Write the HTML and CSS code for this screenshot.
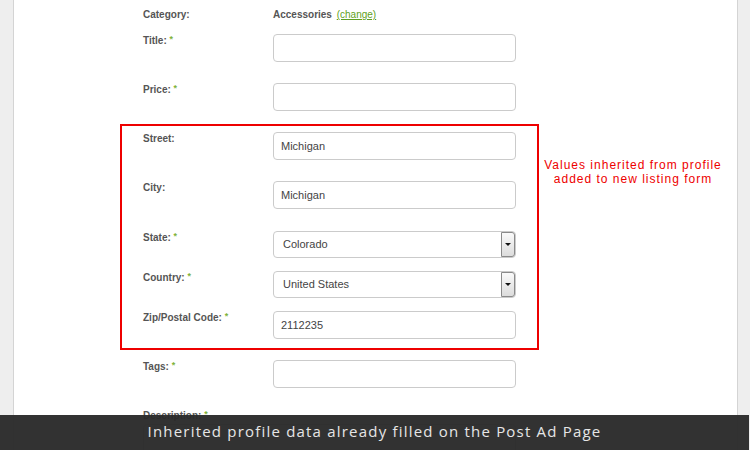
FILE: index.html
```html
<!DOCTYPE html>
<html>
<head>
<meta charset="utf-8">
<link rel="stylesheet" href="styles.css">
</head>
<body>
<div class="page">
  <div class="form">
    <div class="group first">
      <div class="row row-cat">
        <div class="label">Category:</div>
        <div class="value">Accessories <a class="change" href="#">(change)</a></div>
      </div>
      <div class="row row-title">
        <div class="label">Title: <span class="req">*</span></div>
        <div class="input"></div>
      </div>
      <div class="row row-text">
        <div class="label">Price: <span class="req">*</span></div>
        <div class="input"></div>
      </div>
    </div>
    <div class="hl-wrap">
      <div class="group hl">
        <div class="row row-first">
          <div class="label">Street:</div>
          <div class="input">Michigan</div>
        </div>
        <div class="row row-text">
          <div class="label">City:</div>
          <div class="input">Michigan</div>
        </div>
        <div class="row row-state">
          <div class="label">State: <span class="req">*</span></div>
          <div class="select"><span class="sel-text">Colorado</span><span class="sel-btn"><span class="tri"></span></span></div>
        </div>
        <div class="row row-sel">
          <div class="label">Country: <span class="req">*</span></div>
          <div class="select"><span class="sel-text">United States</span><span class="sel-btn"><span class="tri"></span></span></div>
        </div>
        <div class="row row-sel">
          <div class="label">Zip/Postal Code: <span class="req">*</span></div>
          <div class="input">2112235</div>
        </div>
      </div>
      <p class="note">Values inherited from profile<br>added to new listing form</p>
    </div>
    <div class="group last">
      <div class="row row-tags">
        <div class="label">Tags: <span class="req">*</span></div>
        <div class="input"></div>
      </div>
      <div class="label desc-label">Description: <span class="req">*</span></div>
      <div class="textarea"></div>
    </div>
  </div>
</div>
<div class="caption">Inherited profile data already filled on the Post Ad Page</div>
</body>
</html>
```
FILE: styles.css
```css
html, body {
  margin: 0;
  padding: 0;
  background: #eeeeee;
}
body {
  position: relative;
  width: 750px;
  height: 450px;
  overflow: hidden;
  font-family: "Liberation Sans", Arial, sans-serif;
  color: #555;
}
.page {
  margin-left: 13px;
  width: 723px;
  height: 450px;
  overflow: hidden;
  background: #fff;
  border-left: 1px solid #d4d4d4;
  border-right: 1px solid #d4d4d4;
}
.form {
  padding-left: 106px;
}
.group {
  width: 373px;
  border: 2px solid transparent;
  padding: 0 21px;
}
.group.first {
  padding-top: 6px;
  padding-bottom: 11px;
}
.group.hl {
  border-color: #ee0000;
  padding-top: 6px;
  padding-bottom: 9px;
}
.group.last {
  padding-top: 8px;
}
.hl-wrap {
  display: flex;
  align-items: flex-start;
}
.note {
  margin: 34px 0 0 2px;
  width: 184px;
  text-align: center;
  color: #ee0000;
  font-size: 12px;
  line-height: 14px;
  letter-spacing: 1px;
}
.row {
  display: flex;
  align-items: flex-start;
}
.row-cat {
  height: 13px;
  margin-top: 0;
}
.row-title { margin-top: 13px; }
.row-text { margin-top: 21px; }
.row-first { margin-top: 0; }
.row-state { margin-top: 22px; }
.row-sel { margin-top: 13px; }
.row-tags { margin-top: 0; }
.label {
  width: 130px;
  flex: none;
  font-size: 10px;
  line-height: 13px;
  font-weight: bold;
  color: #555;
}
.req {
  color: #7fb33a;
  font-size: 9px;
  vertical-align: top;
  line-height: 10px;
}
.value {
  font-size: 10px;
  line-height: 13px;
  font-weight: bold;
  color: #555;
}
.change {
  font-weight: normal;
  color: #5f9f22;
  text-decoration: underline;
  margin-left: 2px;
}
.input {
  box-sizing: border-box;
  width: 243px;
  height: 28px;
  border: 1px solid #cbcbcb;
  border-radius: 4px;
  background: #fff;
  padding-left: 7px;
  font-size: 11px;
  line-height: 26px;
  color: #444;
}
.select {
  box-sizing: border-box;
  width: 243px;
  height: 27px;
  border: 1px solid #cbcbcb;
  border-radius: 4px;
  background: #fff;
  display: flex;
  align-items: stretch;
  font-size: 11px;
  color: #444;
}
.sel-text {
  flex: 1;
  padding-left: 9px;
  line-height: 25px;
}
.sel-btn {
  width: 12px;
  border: 1px solid #8a8a8a;
  border-radius: 0 3px 3px 0;
  background: linear-gradient(#fafafa, #dcdcdc);
  display: flex;
  align-items: center;
  justify-content: center;
}
.tri {
  width: 0;
  height: 0;
  border-left: 3px solid transparent;
  border-right: 3px solid transparent;
  border-top: 3px solid #111;
}
.desc-label {
  margin-top: 21px;
}
.textarea {
  box-sizing: border-box;
  margin-top: 2px;
  width: 373px;
  height: 80px;
  border: 1px solid #cbcbcb;
  border-radius: 4px;
}
.caption {
  position: absolute;
  left: 0;
  width: 749px;
  bottom: 0;
  height: 35px;
  background: rgba(42, 42, 42, 0.96);
  color: #e6e6e6;
  font-family: "Open Sans", sans-serif;
  font-size: 15px;
  line-height: 33px;
  letter-spacing: 1.2px;
  text-align: center;
}
```
